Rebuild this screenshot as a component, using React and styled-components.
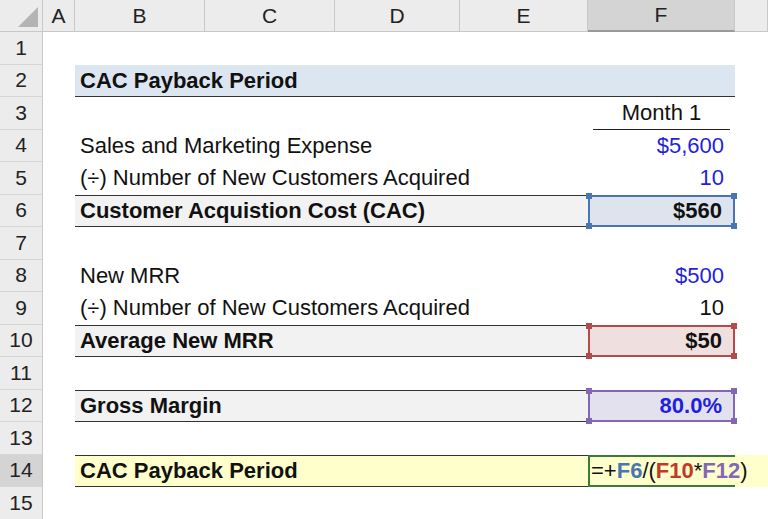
import React from "react";
import styled, { createGlobalStyle } from "styled-components";

const Global = createGlobalStyle`
  html, body { margin: 0; background: #fff; }
  body { font-family: "Liberation Sans", Arial, sans-serif; color: #111; }
`;

const Sheet = styled.div`
  display: grid;
  grid-template-columns: 43px 32px 130px 130px 125px 128px 147px 33px;
  grid-template-rows: 32px repeat(15, 32.5px);
  width: 768px;
  height: 519px;
  overflow: hidden;
`;

const Corner = styled.div`
  background: #ececec;
  border-right: 1px solid #c8c8c8;
  border-bottom: 1px solid #c8c8c8;
  position: relative;
  &::after {
    content: "";
    position: absolute;
    right: 4px;
    bottom: 4px;
    border-left: 20px solid transparent;
    border-bottom: 20px solid #b4b4b4;
  }
`;

const ColHead = styled.div`
  background: ${({ $sel }) => ($sel ? "#d4d4d4" : "#ececec")};
  border-right: 1px solid #c8c8c8;
  border-bottom: ${({ $sel }) => ($sel ? "2px solid #9a9a9a" : "1px solid #c8c8c8")};
  display: flex;
  align-items: center;
  justify-content: center;
  font-size: 21px;
  color: #222;
`;

const RowHead = styled.div`
  grid-column: 1;
  background: ${({ $sel }) => ($sel ? "#d4d4d4" : "#ececec")};
  border-right: 1px solid #c8c8c8;
  border-bottom: 1px solid #d6d6d6;
  display: flex;
  align-items: center;
  justify-content: center;
  font-size: 21px;
  color: #222;
`;

const Band = styled.div`
  grid-column: 3 / 8;
  background: ${({ $bg }) => $bg || "transparent"};
  border-top: ${({ $top }) => ($top ? "1px solid #333" : "none")};
  border-bottom: ${({ $bottom }) => ($bottom ? "1px solid #333" : "none")};
  grid-row: ${({ $row }) => $row};
`;

const Label = styled.div`
  grid-column: 3 / 7;
  grid-row: ${({ $row }) => $row};
  display: flex;
  align-items: center;
  padding-left: 5px;
  font-size: 22px;
  font-weight: ${({ $bold }) => ($bold ? 700 : 400)};
  white-space: nowrap;
  z-index: 1;
`;

const Value = styled.div`
  grid-column: 7;
  grid-row: ${({ $row }) => $row};
  position: relative;
  display: flex;
  align-items: center;
  justify-content: flex-end;
  padding-right: 11px;
  font-size: 22px;
  font-weight: ${({ $bold }) => ($bold ? 700 : 400)};
  color: ${({ $color }) => $color || "#111"};
  background: ${({ $fill }) => $fill || "transparent"};
  border: ${({ $frame }) => ($frame ? `2px solid ${$frame}` : "none")};
  white-space: nowrap;
  z-index: 2;
`;

const Underline = styled.div`
  grid-column: 7;
  grid-row: ${({ $row }) => $row};
  margin: 0 5px;
  border-bottom: 1px solid #222;
  display: flex;
  align-items: center;
  justify-content: center;
  font-size: 22px;
`;

const Formula = styled.div`
  grid-column: 7 / 9;
  grid-row: 15;
  display: flex;
  align-items: center;
  padding-left: 3px;
  font-size: 22px;
  background: #ffffcc;
  z-index: 2;
  position: relative;
  &::before {
    content: "";
    position: absolute;
    left: 0;
    top: 0;
    bottom: 0;
    width: 147px;
    border: 2px solid #3b7a3b;
    border-right: none;
    box-sizing: border-box;
  }
`;

const Ref = styled.span`
  color: ${({ $c }) => $c};
  font-weight: 700;
`;

const Handle = styled.span`
  position: absolute;
  width: 6px;
  height: 6px;
  background: ${({ $c }) => $c};
  ${({ $v }) => ($v === "t" ? "top: -4px;" : "bottom: -4px;")}
  ${({ $h }) => ($h === "l" ? "left: -4px;" : "right: -4px;")}
`;

const Handles = ({ c }) => (
  <>
    <Handle $c={c} $v="t" $h="l" />
    <Handle $c={c} $v="t" $h="r" />
    <Handle $c={c} $v="b" $h="l" />
    <Handle $c={c} $v="b" $h="r" />
  </>
);

const cols = ["A", "B", "C", "D", "E", "F", ""];
const BLUE = "#1f1fdd";

const rows = [
  { r: 4, label: "Sales and Marketing Expense", value: "$5,600", color: BLUE },
  { r: 5, label: "(÷) Number of New Customers Acquired", value: "10", color: BLUE },
  { r: 6, label: "Customer Acquistion Cost (CAC)", value: "$560", bold: true, band: true, fill: "#dee4ed", frame: "#4a74b4" },
  { r: 8, label: "New MRR", value: "$500", color: BLUE },
  { r: 9, label: "(÷) Number of New Customers Acquired", value: "10" },
  { r: 10, label: "Average New MRR", value: "$50", bold: true, band: true, fill: "#f0dfdf", frame: "#b44a4a" },
  { r: 12, label: "Gross Margin", value: "80.0%", bold: true, band: true, fill: "#e4e1ee", frame: "#8467b4", color: BLUE },
];

export default function App() {
  return (
    <>
      <Global />
      <Sheet>
        <Corner />
        {cols.map((c, i) => (
          <ColHead key={i} $sel={c === "F"}>{c}</ColHead>
        ))}
        {Array.from({ length: 15 }, (_, i) => (
          <RowHead key={i} style={{ gridRow: i + 2 }} $sel={i + 1 === 14}>{i + 1}</RowHead>
        ))}

        <Band $row={3} $bg="#dce6f1" $bottom />
        <Label $row={3} $bold>CAC Payback Period</Label>
        <Underline $row={4}>Month 1</Underline>

        {rows.map((row) => (
          <React.Fragment key={row.r}>
            {row.band && <Band $row={row.r + 1} $bg="#f2f2f2" $top $bottom />}
            <Label $row={row.r + 1} $bold={row.bold}>{row.label}</Label>
            <Value $row={row.r + 1} $bold={row.bold} $color={row.color} $fill={row.fill} $frame={row.frame}>
              {row.value}
              {row.frame && <Handles c={row.frame} />}
            </Value>
          </React.Fragment>
        ))}

        <Band $row={15} $bg="#ffffcc" $top $bottom />
        <Label $row={15} $bold>CAC Payback Period</Label>
        <Formula>
          =+<Ref $c="#4a74b4">F6</Ref>/(<Ref $c="#c0392b">F10</Ref>*<Ref $c="#8467b4">F12</Ref>)
        </Formula>
      </Sheet>
    </>
  );
}
